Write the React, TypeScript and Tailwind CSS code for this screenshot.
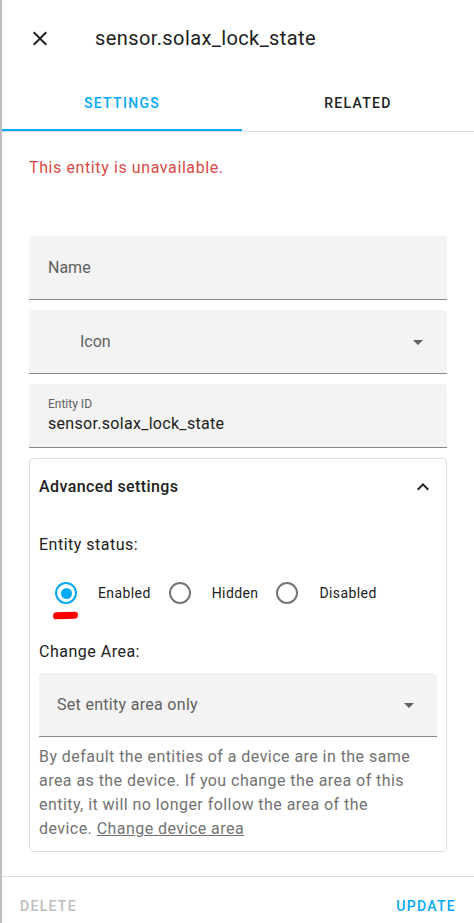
import React, { useState } from 'react'

function Radio({ checked }: { checked: boolean }) {
  return (
    <span className="relative flex h-10 w-10 items-center justify-center">
      <span
        className={`flex h-[22px] w-[22px] items-center justify-center rounded-full border-2 ${checked ? 'border-[#03a9f4]' : 'border-[#757575]'}`}
      >
        {checked && <span className="h-[11px] w-[11px] rounded-full bg-[#03a9f4]" />}
      </span>
    </span>
  )
}

function Caret() {
  return (
    <svg width="24" height="24" viewBox="0 0 24 24" className="text-[#5f5f5f]">
      <path d="M7 10l5 5 5-5z" fill="currentColor" />
    </svg>
  )
}

export default function App() {
  const [status, setStatus] = useState<'enabled' | 'hidden' | 'disabled'>('enabled')

  return (
    <div className="h-[923px] w-[474px] overflow-hidden border-l-2 border-[#bdbdbd] bg-white font-['Roboto',sans-serif] text-[#212121]">
      {/* header */}
      <div className="flex h-[76px] items-center">
        <button className="ml-[26px] flex h-6 w-6 items-center justify-center">
          <svg width="29" height="29" viewBox="0 0 24 24">
            <path
              d="M19 6.41L17.59 5 12 10.59 6.41 5 5 6.41 10.59 12 5 17.59 6.41 19 12 13.41 17.59 19 19 17.59 13.41 12z"
              fill="#212121"
            />
          </svg>
        </button>
        <h1 className="ml-[43px] text-[20px] font-normal tracking-[0.4px]">sensor.solax_lock_state</h1>
      </div>

      {/* tabs */}
      <div className="flex h-[56px] border-b border-[#e0e0e0]">
        <div className="relative flex w-[240px] items-center justify-center text-[14px] font-medium tracking-[1.3px] text-[#03a9f4]">
          SETTINGS
          <span className="absolute bottom-0 left-0 right-0 h-[2px] bg-[#03a9f4]" />
        </div>
        <div className="flex flex-1 items-center justify-center text-[14px] font-medium tracking-[1.3px] text-[#212121]">
          RELATED
        </div>
      </div>

      <div className="px-[27px] pt-[24px]">
        <p className="text-[16px] tracking-[0.6px] text-[#d84a45]">This entity is unavailable.</p>

        <div className="mt-[56px] flex flex-col gap-[10px]">
          <div className="flex h-[64px] items-center rounded-t bg-[#f3f3f3] border-b border-[#8a8a8a] px-[19px] text-[16px] text-[#616161]">
            Name
          </div>
          <div className="flex h-[64px] items-center justify-between rounded-t bg-[#f3f3f3] border-b border-[#8a8a8a] pl-[51px] pr-[17px] text-[16px] text-[#616161]">
            Icon
            <Caret />
          </div>
          <div className="flex h-[64px] flex-col justify-center rounded-t bg-[#f3f3f3] border-b border-[#8a8a8a] px-[19px]">
            <span className="text-[12px] leading-[16px] text-[#616161]">Entity ID</span>
            <span className="text-[16px] leading-[24px] tracking-[0.3px] text-[#212121]">sensor.solax_lock_state</span>
          </div>

          <div className="rounded border border-[#e0e0e0] px-[9px] pb-[10px]">
            <div className="flex h-[56px] items-center justify-between">
              <span className="text-[16px] font-medium tracking-[0.4px]">Advanced settings</span>
              <svg width="24" height="24" viewBox="0 0 24 24" className="mr-[2px]">
                <path d="M7.41 15.41L12 10.83l4.59 4.58L18 14l-6-6-6 6z" fill="#212121" />
              </svg>
            </div>

            <p className="mt-[18px] text-[16px] tracking-[0.5px] text-[#212121]">Entity status:</p>

            <div className="mt-[16px] flex items-center pl-[7px]">
              <label className="mr-[9px] flex items-center" onClick={() => setStatus('enabled')}>
                <Radio checked={status === 'enabled'} />
                <span className="ml-[12px] text-[14px] tracking-[0.4px] text-[#212121]">Enabled</span>
              </label>
              <label className="mr-[9px] flex items-center" onClick={() => setStatus('hidden')}>
                <Radio checked={status === 'hidden'} />
                <span className="ml-[12px] text-[14px] tracking-[0.4px] text-[#212121]">Hidden</span>
              </label>
              <label className="flex items-center" onClick={() => setStatus('disabled')}>
                <Radio checked={status === 'disabled'} />
                <span className="ml-[12px] text-[14px] tracking-[0.4px] text-[#212121]">Disabled</span>
              </label>
            </div>
            {/* red marker from the screenshot */}
            <div className="ml-[14px] mt-[-1px] h-[7px] w-[25px] -skew-y-2 rounded-sm bg-[#ff0000]" />

            <p className="mt-[21px] text-[16px] tracking-[0.5px] text-[#212121]">Change Area:</p>

            <div className="mt-[9px] flex h-[64px] items-center justify-between rounded-t bg-[#f3f3f3] border-b border-[#8a8a8a] pl-[18px] pr-[16px] text-[16px] tracking-[0.3px] text-[#616161]">
              Set entity area only
              <Caret />
            </div>

            <p className="mt-[8px] max-w-[386px] text-[16px] leading-[24px] tracking-[0.45px] text-[#727272]">
              By default the entities of a device are in the same area as the device. If you change the area of this entity, it will no longer follow the area of the device.{' '}
              <a className="underline">Change device area</a>
            </p>
          </div>
        </div>
      </div>

      {/* footer */}
      <div className="mt-[24px] flex h-[52px] items-center justify-between border-t border-[#e0e0e0] px-[18px] pt-[8px]">
        <span className="text-[14px] font-medium tracking-[1.3px] text-[#bdbdbd]">DELETE</span>
        <span className="text-[14px] font-medium tracking-[1.3px] text-[#03a9f4]">UPDATE</span>
      </div>
    </div>
  )
}
